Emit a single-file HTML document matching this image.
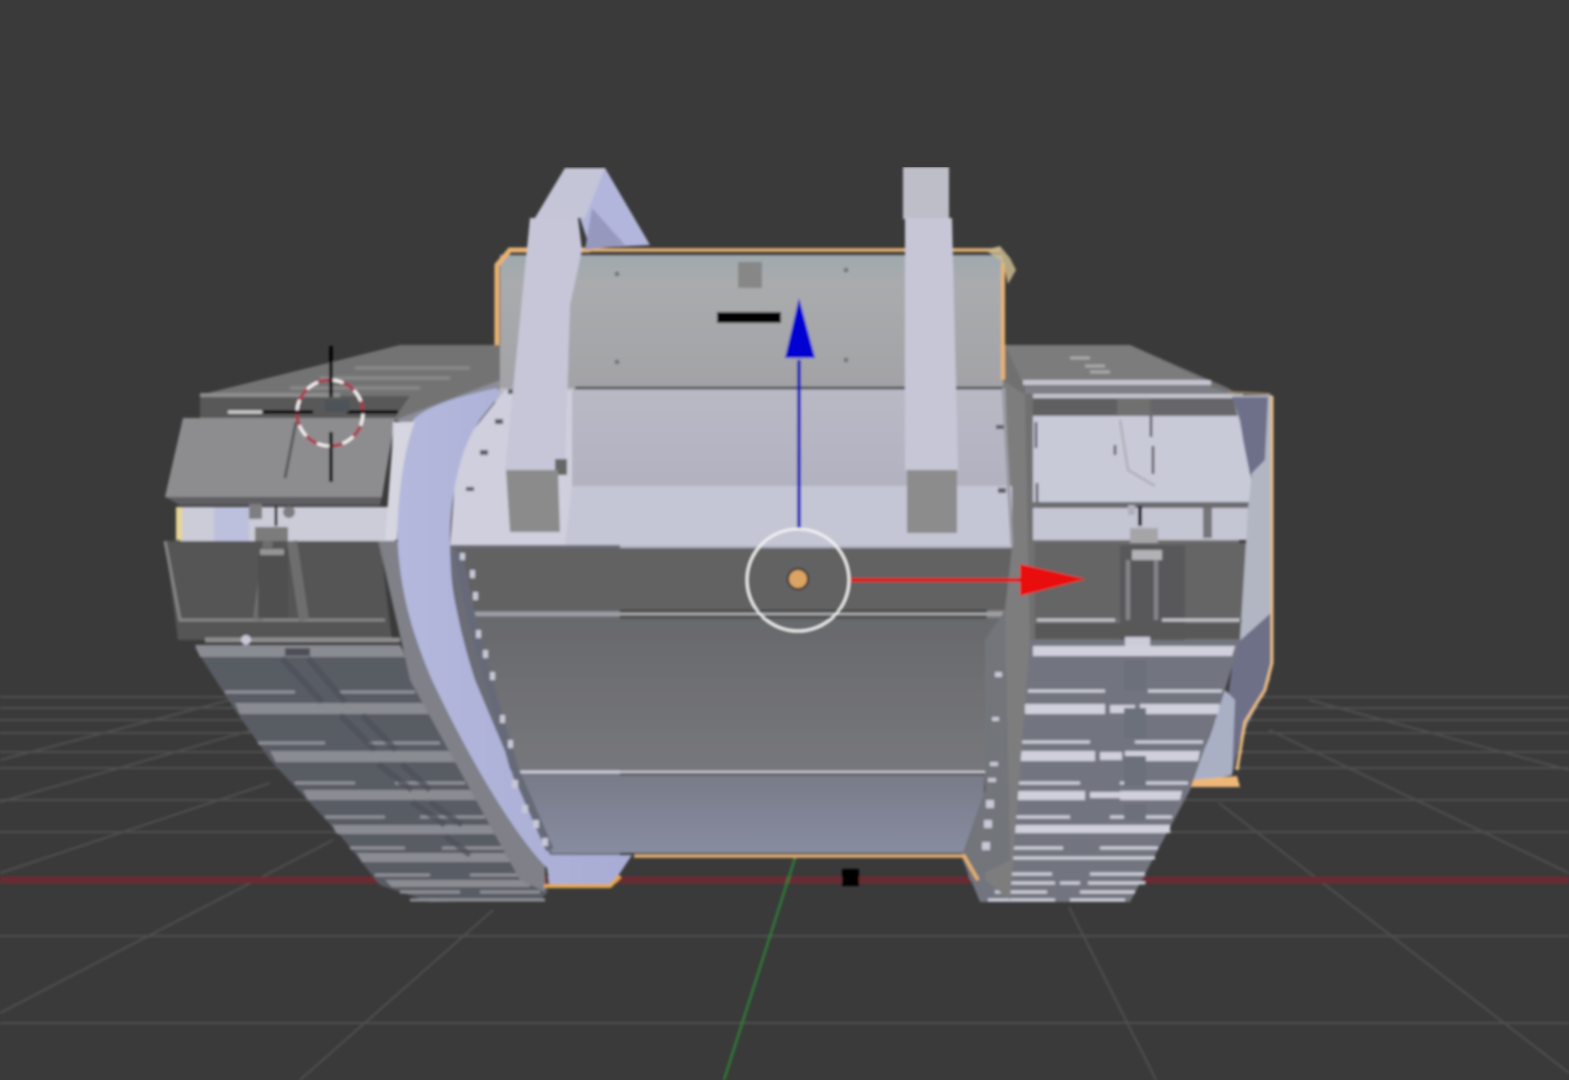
<!DOCTYPE html>
<html><head><meta charset="utf-8"><title>Blender viewport</title>
<style>html,body{margin:0;padding:0;background:#3a3a3a;overflow:hidden}svg{display:block}</style></head>
<body>
<svg width="1569" height="1080" viewBox="0 0 1569 1080" xmlns="http://www.w3.org/2000/svg">
<defs>
<filter id="b" x="0" y="0" width="100%" height="100%"><feGaussianBlur stdDeviation="1.2"/></filter>
<linearGradient id="plate" x1="0" y1="0" x2="0" y2="1"><stop offset="0" stop-color="#9fa9ae"/><stop offset=".2" stop-color="#a9abad"/><stop offset="1" stop-color="#a3a3a6"/></linearGradient>
<linearGradient id="mid" x1="0" y1="0" x2="0" y2="1"><stop offset="0" stop-color="#b9b9c6"/><stop offset="1" stop-color="#adadbc"/></linearGradient>
<linearGradient id="f1" x1="0" y1="0" x2="0" y2="1"><stop offset="0" stop-color="#68696c"/><stop offset="1" stop-color="#76777c"/></linearGradient>
<linearGradient id="f2" x1="0" y1="0" x2="0" y2="1"><stop offset="0" stop-color="#787b88"/><stop offset="1" stop-color="#888ca0"/></linearGradient>
<linearGradient id="band" x1="0" y1="0" x2="1" y2="0"><stop offset="0" stop-color="#b4b8dc"/><stop offset="1" stop-color="#a8acd4"/></linearGradient>
</defs>
<rect width="1569" height="1080" fill="#3a3a3a"/>
<g filter="url(#b)">
<!-- grid -->
<g stroke="#4f4f4f" stroke-width="2" fill="none">
<path d="M0 697H1569M0 708H1569M0 720H1569M0 733H1569M0 752H1569M0 768H1569M0 800H1569M0 832H1569M0 936H1569M0 1023H1569"/>
<path d="M0 760L230 700M0 802L270 725M0 873L270 783M0 1013L333 840M300 1080L493 910M1069 907L1156 1080M1219 803L1569 1073M1269 730L1569 873M1309 700L1569 770"/>
</g>
<path d="M0 880H1569" stroke="#6a2a32" stroke-width="7"/>
<path d="M795 858L724 1080" stroke="#2f7a37" stroke-width="2.5"/>

<!-- LEFT upper track -->
<polygon points="200,395 400,345 500,345 500,382 395,420 200,418" fill="#737373"/>
<path d="M355 368H470M320 378H450M290 388H420" stroke="#8a8a8a" stroke-width="3"/>
<polygon points="200,396 410,396 395,418 200,418" fill="#595959"/>
<path d="M200 395H340" stroke="#8d8d8d" stroke-width="4"/>
<path d="M228 412H262" stroke="#cfcfcf" stroke-width="3"/>
<polygon points="395,420 500,380 500,395 410,425" fill="#8b8d98"/>
<polygon points="183,418 395,418 382,497 165,497" fill="#8d8d8f"/>
<polygon points="165,497 382,497 380,505 180,505" fill="#5e5e64"/>
<path d="M296 422L285 478" stroke="#55595c" stroke-width="3"/>
<rect x="180" y="507" width="215" height="34" fill="#cbccd8"/>
<rect x="214" y="507" width="35" height="34" fill="#bcc0dc"/>
<rect x="176" y="507" width="6" height="33" fill="#e8d594"/>
<rect x="249" y="504" width="13" height="15" fill="#7e7e80"/>
<circle cx="289" cy="512" r="6" fill="#7e7e80"/>
<path d="M276 506V526" stroke="#111" stroke-width="3"/>
<rect x="255" y="527" width="33" height="16" fill="#7c7c7c"/>
<polygon points="165,541 380,541 392,640 178,640" fill="#555556"/>
<path d="M165 541L180 620H385" stroke="#858585" stroke-width="3" fill="none"/>
<path d="M268 541L258 620M292 541L304 620" stroke="#6e6e6e" stroke-width="10"/>
<rect x="258" y="548" width="30" height="70" fill="#4f4f50"/>
<path d="M260 552H284" stroke="#959595" stroke-width="6"/>
<polygon points="378,541 397,541 430,680 408,670" fill="#7c7c7c"/>
<path d="M205 640H400" stroke="#8d8d8f" stroke-width="5"/>

<!-- LEFT lower tread -->
<polygon points="195,648 412,648 548,892 540,900 430,902 380,885 340,835 270,760 235,710" fill="#585b64"/>
<g fill="#8a8c93">
<polygon points="195,645 400,645 405,657 200,657"/><polygon points="235,703 428,703 432,714 240,714"/>
<polygon points="270,751 452,751 456,762 276,762"/><polygon points="303,790 475,790 478,800 308,800"/>
<polygon points="332,825 497,825 500,834 337,834"/><polygon points="357,853 510,853 513,862 362,862"/>
<polygon points="385,880 530,880 530,887 392,887"/>
</g>
<g stroke="#8f9098" stroke-width="3" fill="none">
<path d="M225 692H295M340 692H415M258 743H325M368 743H440M295 783H355M395 783H465M325 817H385M420 817H485M350 848H405M442 848H505M375 875H430M470 875H522M400 892H460M480 892H540M410 900H545"/>
</g>
<g stroke="#4c4f58" stroke-width="6" fill="none" opacity=".7">
<path d="M282 658L322 702M308 658L345 702M340 715L375 750M362 715L396 750M378 764L412 790M402 764L430 790M412 802L445 825M430 802L462 825M445 836L470 855"/>
</g>
<rect x="285" y="648" width="25" height="8" fill="#4f5058"/>
<circle cx="246" cy="640" r="5" fill="#c8c8d4"/>

<!-- Right upper track -->
<polygon points="1005,345 1130,345 1228,388 1238,395 1240,640 1030,640 1005,420" fill="#6f6f6f"/>
<polygon points="1005,345 1130,345 1208,382 1022,382" fill="#7b7b7b"/>
<path d="M1070 358H1090M1085 366H1105M1090 372H1110" stroke="#a8a8a8" stroke-width="3"/>
<rect x="1023" y="380" width="188" height="5" fill="#c5c5d0"/>
<polygon points="1025,386 1208,386 1235,394 1025,394" fill="#7e7e84"/>
<rect x="1033" y="394" width="210" height="4" fill="#c5c5d0"/>
<rect x="1033" y="399" width="84" height="16" fill="#5f5f60"/>
<rect x="1150" y="399" width="95" height="16" fill="#666668"/>
<rect x="1033" y="416" width="218" height="86" fill="#c9cad8"/>
<rect x="1038" y="502" width="212" height="6" fill="#6b6b70"/>
<rect x="1033" y="508" width="218" height="32" fill="#c5c6d4"/>
<path d="M1036 422V448M1037 483V502M1115 445V455M1153 446V474M1151 412V437" stroke="#6c6c74" stroke-width="3"/>
<path d="M1120 420L1128 470L1155 486" stroke="#b3b3bc" stroke-width="3" fill="none"/>
<rect x="1203" y="508" width="9" height="30" fill="#767678"/>
<rect x="1128" y="505" width="7" height="10" fill="#b0b0b8"/>
<path d="M1140 506V526" stroke="#111" stroke-width="4"/>
<rect x="1130" y="528" width="28" height="20" fill="#a5a5a8"/>
<rect x="1035" y="543" width="212" height="76" fill="#656565"/>
<rect x="1120" y="545" width="65" height="96" fill="#58585a"/>
<rect x="1132" y="550" width="30" height="10" fill="#b2b2b6"/>
<path d="M1128 560V620M1156 560V620" stroke="#85858a" stroke-width="4"/>
<path d="M1037 620H1115M1162 620H1240" stroke="#c2c2c8" stroke-width="3"/>
<rect x="1035" y="623" width="210" height="16" fill="#585859"/>

<!-- Right side purple / outline -->
<polygon points="1232,395 1272,395 1272,640 1240,640 1248,510 1252,470" fill="#b2b6c2"/>
<polygon points="1232,397 1268,397 1265,460 1250,475 1243,440 1240,420" fill="#6e6f8a"/>
<polygon points="1235,645 1272,612 1270,680 1240,740 1232,775 1218,770" fill="#6e7088"/>
<polygon points="1225,690 1235,700 1232,775 1190,785 1210,735" fill="#a9b0c4"/>
<path d="M1228 392L1270 394" stroke="#9a8660" stroke-width="2"/>
<polyline points="1272,396 1272,663 1265,690 1245,722 1237,770" fill="none" stroke="#e8bc80" stroke-width="3"/>
<polygon points="1190,780 1237,776 1240,787 1190,787" fill="#eeb777"/>

<!-- RIGHT lower tread -->
<polygon points="1030,640 1240,640 1225,690 1190,790 1130,902 980,902 962,858 1000,850 1020,700" fill="#72757f"/>
<g fill="#cfd0dc">
<polygon points="1033,646 1235,646 1232,656 1033,656"/>
<polygon points="1025,704 1105,704 1105,714 1025,714"/><rect x="1110" y="705" width="25" height="8"/><polygon points="1140,704 1220,704 1218,714 1140,714"/>
<polygon points="1016,751 1095,751 1095,761 1016,761"/><rect x="1100" y="752" width="22" height="8"/><polygon points="1125,751 1200,751 1198,761 1125,761"/>
<polygon points="1012,791 1085,791 1085,800 1012,800"/><rect x="1090" y="792" width="30" height="6"/><polygon points="1120,791 1182,791 1180,800 1120,800"/>
<rect x="1005" y="825" width="165" height="8"/>
</g>
<g stroke="#cbccd8" stroke-width="3" fill="none">
<path d="M1028 691H1105M1148 691H1222M1022 742H1090M1135 742H1203M1015 783H1080M1120 783H1188M1008 817H1070M1110 817H1172M1002 848H1063M1100 848H1158M1000 858H1155M998 874H1052M1090 874H1145M995 883H1055M1060 883H1080M1088 883H1145M995 892H1047M1080 892H1135M988 900H1055M1070 900H1125"/>
</g>
<rect x="1125" y="637" width="25" height="9" fill="#cbccd8"/>
<path d="M1135 660V820" stroke="#6c6f7a" stroke-width="22" stroke-dasharray="30 18"/>

<!-- Gray vertical band, right -->
<polygon points="1003,380 1025,395 1030,640 1010,900 985,880 985,640" fill="#7d7d7e"/>

<!-- Centre hull -->
<polygon points="500,255 1003,255 1003,388 500,388" fill="url(#plate)"/>
<polygon points="500,388 1005,388 1012,548 452,548 485,430" fill="url(#mid)"/>
<polygon points="468,486 1012,486 1012,546 452,546" fill="#c5c6d5"/>
<polygon points="505,390 572,390 572,485 565,546 450,546 457,450" fill="#cfcfdd"/>
<polygon points="448,545 620,545 620,855 548,858 500,770 465,670" fill="#6a6c76"/>

<!-- Left curve band -->
<polygon points="380,541 397,541 432,680 545,860 545,892 520,880 410,680" fill="#7f8088"/>
<path d="M497 388C450 398 425 408 413 420C402 445 397 480 397 520C397 590 415 640 432 680C465 750 510 830 547 868L550 888L610 888L632 855L550 855C530 810 500 740 475 680C462 640 450 590 450 545C450 500 458 450 480 420L500 395Z" fill="url(#band)"/>
<path d="M393 422L415 422C405 445 398 490 397 540L385 540L392 450Z" fill="#d6d6e0"/>

<polygon points="455,548 1012,548 1005,610 470,610" fill="#626263"/>
<polygon points="470,618 1003,618 985,770 510,770" fill="url(#f1)"/>
<path d="M468 614H1003" stroke="#a0a1a5" stroke-width="4"/>
<path d="M512 772H985" stroke="#cbcbd5" stroke-width="3"/>
<polygon points="512,775 985,775 980,853 552,853" fill="url(#f2)"/>
<polygon points="985,640 1005,610 1010,860 970,880 962,855 985,790" fill="#72747a"/>
<path d="M575 388H1003" stroke="#55555f" stroke-width="3"/>
<!-- rivet edges -->
<path d="M458 552L470 610L480 650L500 720L515 770L550 850" stroke="#666a78" stroke-width="8" fill="none"/>
<g fill="#c8c8d6">
<rect x="460" y="553" width="5" height="7"/><rect x="470" y="570" width="5" height="8"/><rect x="473" y="592" width="5" height="8"/><rect x="476" y="630" width="5" height="8"/><rect x="483" y="650" width="5" height="8"/><rect x="490" y="672" width="5" height="8"/><rect x="500" y="715" width="5" height="8"/><rect x="508" y="740" width="5" height="8"/><rect x="512" y="780" width="6" height="8"/><rect x="522" y="805" width="6" height="8"/><rect x="533" y="820" width="6" height="8"/><rect x="542" y="838" width="6" height="8"/>
<rect x="995" y="672" width="7" height="5"/><rect x="992" y="717" width="7" height="4"/><rect x="990" y="762" width="8" height="4"/><rect x="988" y="778" width="8" height="4"/><rect x="986" y="800" width="8" height="8"/><rect x="984" y="820" width="8" height="8"/><rect x="982" y="842" width="8" height="8"/>
</g>
<g fill="#5c5c68">
<rect x="508" y="389" width="7" height="5"/><rect x="495" y="419" width="8" height="5"/><rect x="480" y="450" width="8" height="5"/><rect x="466" y="487" width="8" height="4"/><rect x="996" y="425" width="8" height="4"/><rect x="998" y="488" width="8" height="5"/>
</g>
<path d="M1003 388L1012 545" stroke="#9a9aa2" stroke-width="3"/>

<!-- Top plate outline -->
<path d="M497 345V265L510 250H590" fill="none" stroke="#e8b270" stroke-width="5"/>
<path d="M590 250H1000" fill="none" stroke="#e8b270" stroke-width="3.5"/>
<path d="M1003 262V380" stroke="#e8b270" stroke-width="4"/>
<path d="M985 250L1000 246L1010 258L1016 270L1008 284L1003 262Z" fill="#c9b88f" opacity=".85"/>
<rect x="738" y="262" width="24" height="26" fill="#878787"/>
<rect x="717" y="312" width="64" height="11" fill="#060606"/>
<g fill="#777"><circle cx="617" cy="274" r="2.5"/><circle cx="617" cy="362" r="2.5"/><circle cx="846" cy="270" r="2.5"/><circle cx="846" cy="360" r="2.5"/></g>

<!-- Left arch -->
<polygon points="535,218 565,168 605,168 650,245 590,248 580,218" fill="#b2b6dc"/>
<polygon points="565,168 605,168 585,218 535,218" fill="#c5c5d8"/>
<polygon points="585,250 592,208 625,245" fill="#9699bd"/>
<polygon points="530,218 578,218 582,250 570,305 565,470 505,470 518,340" fill="#c6c6d8"/>
<rect x="555" y="459" width="12" height="16" fill="#666"/>
<polygon points="506,470 558,470 560,532 510,532" fill="#8b8b8b"/>

<!-- Right bar -->
<rect x="903" y="167" width="46" height="52" fill="#bebec9"/>
<polygon points="905,218 952,218 958,470 905,470" fill="#c6c6d6"/>
<rect x="907" y="470" width="50" height="63" fill="#8c8c8c"/>

<!-- Orange bottom edge -->
<path d="M634 856H964L978 880" fill="none" stroke="#e4b070" stroke-width="3.5"/>
<path d="M544 886H610L620 876" fill="none" stroke="#e2a850" stroke-width="4"/>

<!-- Manipulator -->
<path d="M799 360V530" stroke="#0a0ab8" stroke-width="3.5"/>
<polygon points="799,298 815,358 785,358" fill="#0505d2"/>
<path d="M850 580H1022" stroke="#e01212" stroke-width="4"/>
<polygon points="1020,564 1086,579 1020,596" fill="#ea0f0f"/>
<circle cx="798" cy="580" r="51" fill="none" stroke="#f4f4f4" stroke-width="2.5"/>
<circle cx="798" cy="579" r="10" fill="#dba463" stroke="#2a2a2a" stroke-width="2"/>
<rect x="842" y="869" width="17" height="17" fill="#050505"/>

<!-- 3D cursor -->
<circle cx="330" cy="413" r="33" fill="none" stroke="#b03048" stroke-width="3"/>
<circle cx="330" cy="413" r="33" fill="none" stroke="#f4f4f4" stroke-width="3" stroke-dasharray="13 13"/>
<path d="M263 412H313M347 412H398M331 346V397M331 432V482" stroke="#050505" stroke-width="3.5"/>
<rect x="325" y="400" width="24" height="12" fill="#4e5358"/>
</g>
</svg>
</body></html>
